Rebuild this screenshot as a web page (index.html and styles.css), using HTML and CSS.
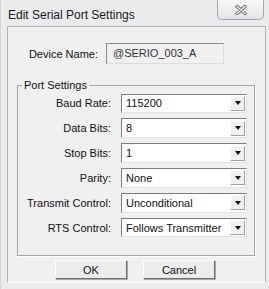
FILE: index.html
```html
<!DOCTYPE html>
<html lang="en">
<head>
    <meta charset="UTF-8">
    <meta name="viewport" content="width=device-width, initial-scale=1.0">
    <title>Edit Serial Port Settings</title>
    <link rel="stylesheet" href="styles.css">
</head>
<body>
    <div class="window">
        <div class="titlebar">
            <span class="title">Edit Serial Port Settings</span>
            <button class="close-button">
                <svg width="12" height="10" viewBox="0 0 12 10">
                    <path d="M2 1.5 L10 8.5 M10 1.5 L2 8.5" stroke="#6c6c6c" stroke-width="3.4" stroke-linecap="round"/>
                    <path d="M2 1.5 L10 8.5 M10 1.5 L2 8.5" stroke="#fafafa" stroke-width="1.4" stroke-linecap="round"/>
                </svg>
            </button>
        </div>

        <div class="client">
            <div class="device-row">
                <label class="device-label">Device Name:</label>
                <div class="textbox">@SERIO_003_A</div>
            </div>

            <fieldset class="port-settings">
                <legend>Port Settings</legend>
                <div class="field-row">
                    <label>Baud Rate:</label>
                    <div class="combo"><span class="combo-value">115200</span><span class="combo-button"></span></div>
                </div>
                <div class="field-row">
                    <label>Data Bits:</label>
                    <div class="combo"><span class="combo-value">8</span><span class="combo-button"></span></div>
                </div>
                <div class="field-row">
                    <label>Stop Bits:</label>
                    <div class="combo"><span class="combo-value">1</span><span class="combo-button"></span></div>
                </div>
                <div class="field-row">
                    <label>Parity:</label>
                    <div class="combo"><span class="combo-value">None</span><span class="combo-button"></span></div>
                </div>
                <div class="field-row">
                    <label>Transmit Control:</label>
                    <div class="combo"><span class="combo-value">Unconditional</span><span class="combo-button"></span></div>
                </div>
                <div class="field-row">
                    <label>RTS Control:</label>
                    <div class="combo"><span class="combo-value">Follows Transmitter</span><span class="combo-button"></span></div>
                </div>
            </fieldset>

            <div class="buttons">
                <button class="dialog-button">OK</button>
                <button class="dialog-button">Cancel</button>
            </div>
        </div>
    </div>
</body>
</html>
```

FILE: styles.css
```css
body {
    margin: 0;
    font-family: "Liberation Sans", Arial, sans-serif;
    font-size: 11px;
    color: #111;
    background: #ffffff;
}

.window {
    width: 269px;
    height: 289px;
    box-sizing: border-box;
    padding: 0 4px 6px 6px;
    background: #eaebed;
    border-left: 1px solid #d4d4d4;
    display: flex;
    flex-direction: column;
}

.titlebar {
    height: 26px;
    display: flex;
    align-items: flex-start;
    justify-content: space-between;
    margin-left: -6px;
    margin-right: -4px;
}

.title {
    font-size: 12px;
    padding: 8px 0 0 7px;
    color: #1a1a1a;
}

.close-button {
    width: 47px;
    height: 20px;
    margin-right: 5px;
    padding: 0;
    border: 1px solid #a3a7ac;
    border-top: none;
    border-radius: 0 0 5px 5px;
    background: linear-gradient(#f7f7f7, #e4e5e7);
    display: flex;
    align-items: center;
    justify-content: center;
}

.client {
    width: 259px;
    height: 257px;
    box-sizing: border-box;
    background: #f0f0f0;
    border: 1px solid #b3b3b3;
    border-bottom-color: #ffffff;
}

.device-row {
    display: flex;
    align-items: center;
    margin-top: 16px;
}

.device-label {
    width: 90px;
    text-align: right;
    margin-right: 8px;
}

.textbox {
    width: 118px;
    height: 21px;
    box-sizing: border-box;
    padding-left: 6px;
    line-height: 19px;
    color: #333;
    background: #f0f0f0;
    border: 1px solid #dcdcdc;
    border-top-color: #8a8a8a;
    border-left-color: #8a8a8a;
}

.port-settings {
    width: 238px;
    box-sizing: border-box;
    margin: 15px 0 0 9px;
    padding: 1.5px 0 18px 0;
    border: 1px solid #a6a6a6;
    box-shadow: 1px 1px 0 #ffffff;
}

.port-settings legend {
    margin-left: 4px;
    padding: 0 2px;
    line-height: 13px;
}

.field-row {
    display: flex;
    align-items: center;
    margin-bottom: 5.4px;
}

.field-row:last-child {
    margin-bottom: 0;
}

.field-row label {
    width: 93px;
    text-align: right;
    margin-right: 10px;
}

.combo {
    width: 126px;
    height: 19.5px;
    box-sizing: border-box;
    background: #ffffff;
    border: 1px solid #e3e3e3;
    border-top-color: #7d7d7d;
    border-left-color: #7d7d7d;
    display: flex;
    align-items: center;
    justify-content: space-between;
    padding: 1px;
}

.combo-value {
    padding-left: 3px;
}

.combo-button {
    width: 15px;
    height: 15px;
    box-sizing: border-box;
    background: #f0f0f0;
    border: 1px solid #a0a0a0;
    border-top-color: #ffffff;
    border-left-color: #ffffff;
    display: flex;
    align-items: center;
    justify-content: center;
}

.combo-button::after {
    content: "";
    border-left: 3.5px solid transparent;
    border-right: 3.5px solid transparent;
    border-top: 4px solid #111;
}

.buttons {
    display: flex;
    gap: 16px;
    margin: 4px 0 0 47px;
}

.dialog-button {
    width: 72px;
    height: 19px;
    padding: 0;
    font-family: inherit;
    font-size: 11px;
    color: #111;
    background: #ececec;
    border: 1px solid #6e6e6e;
    border-top-color: #ffffff;
    border-left-color: #ffffff;
    box-shadow: 1px 1px 0 #a8a8a8;
}
```
